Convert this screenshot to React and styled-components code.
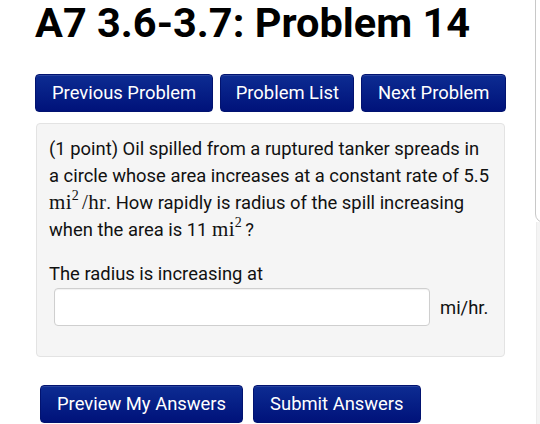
import React from "react";
import styled, { createGlobalStyle } from "styled-components";

const Global = createGlobalStyle`
  html, body { margin: 0; padding: 0; background: #fff; }
  body { font-family: Roboto, "Liberation Sans", sans-serif; color: #111; overflow: hidden; }
  #root { width: 540px; height: 424px; position: relative; overflow: hidden; }
`;

const Page = styled.div`
  padding: 0 0 0 35px;
  width: 490px;
`;

const Title = styled.h1`
  margin: 0;
  font-size: 41.5px;
  line-height: 46px;
  font-weight: 700;
  color: #000;
  white-space: nowrap;
`;

const NavRow = styled.div`
  display: flex;
  gap: ${(p) => p.$gap || 7}px;
  margin-top: ${(p) => p.$top || 28}px;
  margin-left: ${(p) => p.$left || 0}px;
`;

const Button = styled.button`
  flex: none;
  white-space: nowrap;
  height: 38px;
  padding: 0 ${(p) => p.$pad || 15.5}px;
  border: 1px solid #021370;
  border-radius: 4px;
  background: linear-gradient(to bottom, #0d2c92 0%, #061f86 50%, #00127a 100%);
  color: #fff;
  font-family: Roboto, "Liberation Sans", sans-serif;
  font-size: 18.4px;
  line-height: 36px;
  box-sizing: border-box;
  box-shadow: inset 0 1px 0 rgba(255, 255, 255, 0.12);
`;

const ProblemBox = styled.div`
  margin-top: 11px;
  margin-left: 1px;
  width: 469px;
  box-sizing: border-box;
  background: #f5f5f5;
  border: 1px solid #e3e3e3;
  border-radius: 4px;
  padding: 11px 12px 30px 12px;
`;

const Para = styled.p`
  margin: 0;
  font-size: 18.4px;
  line-height: 27px;
  color: #111;
`;

const Math = styled.span`
  font-family: "Liberation Serif", "DejaVu Serif", serif;
  font-size: 21px;
  letter-spacing: 0.3px;
  sup {
    font-size: 14px;
    line-height: 0;
    vertical-align: 9px;
    margin-right: 3px;
  }
`;

const Spacer = styled.div`
  height: ${(p) => p.$h}px;
`;

const AnswerRow = styled.div`
  display: flex;
  align-items: center;
  gap: 10px;
  margin-left: 5px;
  margin-top: 1px;
`;

const Input = styled.input`
  width: 376px;
  height: 38px;
  box-sizing: border-box;
  border: 1px solid #cfcfcf;
  border-radius: 4px;
  background: #fff;
  box-shadow: inset 0 1px 1px rgba(0, 0, 0, 0.06);
`;

const Unit = styled.span`
  font-size: 18.4px;
  color: #111;
`;

const SidePanel = styled.div`
  position: absolute;
  left: 535px;
  top: -10px;
  width: 20px;
  height: 231px;
  border: 1px solid #c8c8c8;
  border-radius: 0 0 0 9px;
  background: #fff;
`;

const SideStrip = styled.div`
  position: absolute;
  left: 536px;
  top: 222px;
  width: 4px;
  bottom: 0;
  background: #f4f4f4;
  border-left: 1px solid #ececec;
`;

export default function App() {
  return (
    <>
      <Global />
      <Page>
        <Title>A7 3.6-3.7: Problem 14</Title>
        <NavRow>
          <Button $pad={16}>Previous Problem</Button>
          <Button $pad={14.5}>Problem List</Button>
          <Button $pad={15.5}>Next Problem</Button>
        </NavRow>
        <ProblemBox>
          <Para>
            (1 point) Oil spilled from a ruptured tanker spreads in a circle whose area
            increases at a constant rate of 5.5{" "}
            <Math>
              mi<sup>2</sup>/hr
            </Math>
            . How rapidly is radius of the spill increasing when the area is 11{" "}
            <Math>
              mi<sup>2</sup>
            </Math>
            ?
          </Para>
          <Spacer $h={17} />
          <Para>The radius is increasing at</Para>
          <AnswerRow>
            <Input type="text" />
            <Unit>mi/hr.</Unit>
          </AnswerRow>
        </ProblemBox>
        <NavRow $top={28} $left={5} $gap={10}>
          <Button $pad={16}>Preview My Answers</Button>
          <Button $pad={16}>Submit Answers</Button>
        </NavRow>
      </Page>
      <SidePanel />
      <SideStrip />
    </>
  );
}
